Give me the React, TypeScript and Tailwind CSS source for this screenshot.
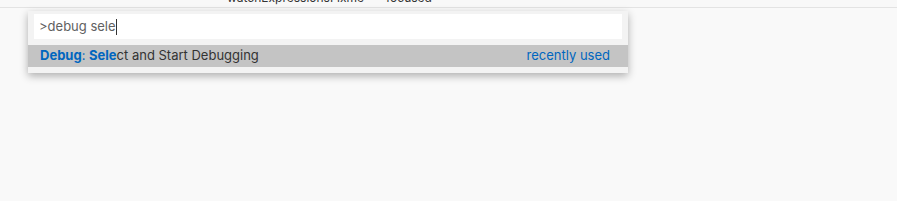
import React from "react";

export default function App() {
  const font = { fontFamily: '"Inter", "Liberation Sans", sans-serif' };
  return (
    <div className="w-[897px] h-[201px] bg-[#f9f9f9] overflow-hidden relative" style={font}>
      <div className="h-[8px] border-b border-[#e3e3e3] bg-[#f8f8f8] overflow-hidden flex items-end">
        <div className="flex gap-[22px] pl-[227px] text-[12px] leading-[14px] text-[#333] mb-[2px] whitespace-nowrap">
          <span>watchExpressionsFixme</span>
          <span>focused</span>
        </div>
      </div>
      <div className="absolute left-[28px] top-[11px] w-[600px] bg-[#f3f3f3] shadow-[0_3px_8px_rgba(0,0,0,0.3)] pt-[3px] pb-[6px]">
        <div className="mx-[6px] h-[25px] bg-white flex items-center pl-[5px] text-[13px] text-[#616161]">
          <span>&gt;debug sele</span>
          <span className="inline-block w-px h-[16px] bg-[#333]"></span>
        </div>
        <div className="mt-[6px] h-[22px] bg-[#c4c4c4] flex items-center justify-between pl-[12px] pr-[18px] text-[13px]">
          <span className="text-[#333] whitespace-nowrap">
            <span className="font-bold text-[#0066bf]">Debug</span>
            <span className="text-[#0066bf]">: </span>
            <span className="font-bold text-[#0066bf]">Sele</span>
            <span>ct and Start Debugging</span>
          </span>
          <span className="text-[#0066bf]">recently used</span>
        </div>
      </div>
    </div>
  );
}
